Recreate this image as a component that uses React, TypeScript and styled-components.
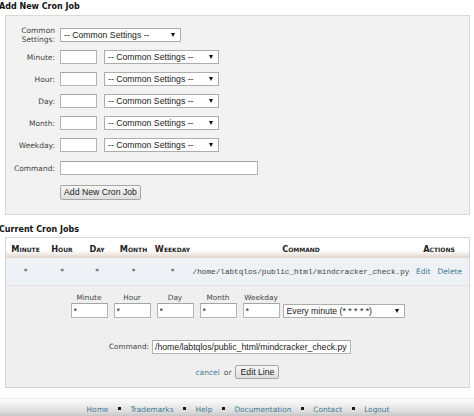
import React from 'react'
import styled, { createGlobalStyle } from 'styled-components'

const GlobalStyle = createGlobalStyle`
  html, body {
    margin: 0;
    padding: 0;
    background: #fff;
  }
  body {
    font-family: "DejaVu Sans", Verdana, sans-serif;
    color: #333;
  }
`

const Page = styled.div`
  width: 474px;
  height: 416px;
  overflow: hidden;
  display: flex;
  flex-direction: column;
`

const Content = styled.div`
  padding: 0 4px 0 5px;
`

const SectionTitle = styled.h3<{ $top?: number; $bottom?: number }>`
  margin: ${({ $top = 0, $bottom = 0 }) => `${$top}px 0 ${$bottom}px -6px`};
  font-size: 8px;
  font-weight: bold;
  line-height: 13px;
  color: #111;
  white-space: nowrap;
`

/* ---------- add form ---------- */

const FormPanel = styled.div`
  box-sizing: border-box;
  height: 200px;
  border: 1px solid #d9d9d9;
  background: #f2f2f2;
  padding-top: 8px;
`

const FormRow = styled.div<{ $offset?: number }>`
  display: flex;
  align-items: center;
  height: 22px;
  margin-top: ${({ $offset = 0 }) => $offset}px;
`

const FieldLabel = styled.label`
  width: 49px;
  margin-right: 5px;
  text-align: right;
  font-size: 7.5px;
  line-height: 9px;
  color: #444;
`

const TextInput = styled.input<{ $width: number; $height?: number }>`
  box-sizing: border-box;
  width: ${({ $width }) => $width}px;
  height: ${({ $height = 14 }) => $height}px;
  margin: 0;
  padding: 0 2px;
  border: 1px solid #b4b4b4;
  border-top-color: #a4a4a4;
  background: #fff;
  font-family: "Liberation Sans", Arial, sans-serif;
  font-size: 8.7px;
  color: #222;
  outline: none;
`

const SelectWrap = styled.div<{ $width: number; $gap?: number }>`
  position: relative;
  width: ${({ $width }) => $width}px;
  margin-left: ${({ $gap = 0 }) => $gap}px;

  &::after {
    content: '';
    position: absolute;
    right: 6px;
    top: 50%;
    margin-top: -2px;
    border-left: 2.5px solid transparent;
    border-right: 2.5px solid transparent;
    border-top: 4px solid #111;
    pointer-events: none;
  }
`

const Select = styled.select<{ $height?: number }>`
  appearance: none;
  box-sizing: border-box;
  display: block;
  width: 100%;
  height: ${({ $height = 14 }) => $height}px;
  margin: 0;
  padding: 0 0 0 3px;
  border: 1px solid #adadad;
  border-radius: 0;
  background: #fff;
  font-family: "Liberation Sans", Arial, sans-serif;
  font-size: 8.7px;
  color: #222;
  outline: none;
`

const Button = styled.button<{ $width: number; $height?: number }>`
  box-sizing: border-box;
  width: ${({ $width }) => $width}px;
  height: ${({ $height = 15 }) => $height}px;
  margin: 0;
  padding: 0;
  border: 1px solid #a6a6a6;
  border-radius: 2px;
  background: linear-gradient(to bottom, #f6f6f6 0%, #ebebeb 50%, #dedede 100%);
  font-family: "Liberation Sans", Arial, sans-serif;
  font-size: 8.7px;
  color: #222;
`

/* ---------- jobs table ---------- */

const columns = '39px 34px 36px 37px 41px 216px 1fr'

const JobsTable = styled.div`
  border: 1px solid #d6d6d6;
  border-bottom: none;
`

const HeadRow = styled.div`
  display: grid;
  grid-template-columns: ${columns};
  align-items: center;
  height: 20px;
  padding-top: 2px;
  box-sizing: border-box;
  background: linear-gradient(to bottom, #fff 0%, #fff 62%, #f1ebe7 80%, #e0d4cc 100%);
`

const HeadCell = styled.div`
  text-align: center;
  white-space: nowrap;
  font-size: 8.2px;
  font-weight: bold;
  font-variant: small-caps;
  color: #222;
`

const DataRow = styled.div`
  display: grid;
  grid-template-columns: ${columns};
  align-items: center;
  height: 27px;
  background: #eef1f6;
`

const DataCell = styled.div<{ $mono?: boolean }>`
  display: flex;
  justify-content: center;
  gap: 7px;
  white-space: nowrap;
  font-family: ${({ $mono }) =>
    $mono ? '"Liberation Mono", "Courier New", monospace' : '"DejaVu Sans", Verdana, sans-serif'};
  font-size: ${({ $mono }) => ($mono ? '7.7px' : '7.5px')};
  color: #444;
`

const Link = styled.a`
  color: #3e7b94;
  text-decoration: none;
  cursor: pointer;
`

const EditPanel = styled.div`
  box-sizing: border-box;
  height: 103px;
  padding-top: 7px;
  border-top: 1px solid #e2e2e2;
  border-bottom: 1px solid #cfcfcf;
  background: #efefef;
`

const EditFields = styled.div`
  display: flex;
  justify-content: center;
  align-items: flex-end;
  gap: 6px;
`

const EditField = styled.div`
  display: flex;
  flex-direction: column;
  align-items: center;
`

const SmallLabel = styled.span`
  font-size: 7.3px;
  line-height: 10px;
  color: #444;
`

const EditCommand = styled.div`
  display: flex;
  justify-content: center;
  align-items: center;
  gap: 3px;
  margin-top: 22px;
  padding-right: 15px;
`

const EditActions = styled.div`
  display: flex;
  justify-content: center;
  align-items: center;
  gap: 4px;
  margin-top: 11px;
  font-size: 7.5px;
  color: #555;
`

/* ---------- footer ---------- */

const Footer = styled.div`
  display: flex;
  justify-content: center;
  align-items: center;
  height: 18px;
  margin-top: 10px;
  padding: 4px 0 0 2px;
  box-sizing: border-box;
  border-top: 1px solid #f0f0f0;
  background: linear-gradient(to bottom, #fbfbfb 0%, #f1f1f1 30%, #dcdcdc 75%, #c6c6c6 100%);
  font-size: 7.4px;
`

const Sep = styled.span`
  width: 3px;
  height: 3px;
  margin: 0 9.5px 2px;
  background: #1a1a1a;
`

const fields = ['Minute', 'Hour', 'Day', 'Month', 'Weekday']
const command = '/home/labtqlos/public_html/mindcracker_check.py'
const footerLinks = ['Home', 'Trademarks', 'Help', 'Documentation', 'Contact', 'Logout']

const CommonSelect: React.FC<{ width: number; gap?: number }> = ({ width, gap }) => (
  <SelectWrap $width={width} $gap={gap}>
    <Select defaultValue="--">
      <option value="--">-- Common Settings --</option>
    </Select>
  </SelectWrap>
)

const App: React.FC = () => {
  return (
    <Page>
      <GlobalStyle />
      <Content>
        <SectionTitle $bottom={2}>Add New Cron Job</SectionTitle>
        <FormPanel>
          <FormRow>
            <FieldLabel>Common Settings:</FieldLabel>
            <CommonSelect width={121} />
          </FormRow>
          {fields.map((f) => (
            <FormRow key={f}>
              <FieldLabel>{f}:</FieldLabel>
              <TextInput $width={37} readOnly defaultValue="" />
              <CommonSelect width={115} gap={7} />
            </FormRow>
          ))}
          <FormRow $offset={1}>
            <FieldLabel>Command:</FieldLabel>
            <TextInput $width={198} readOnly defaultValue="" />
          </FormRow>
          <FormRow $offset={2}>
            <FieldLabel />
            <Button $width={81}>Add New Cron Job</Button>
          </FormRow>
        </FormPanel>

        <SectionTitle $top={8} $bottom={1}>Current Cron Jobs</SectionTitle>
        <JobsTable>
          <HeadRow>
            {fields.map((f) => (
              <HeadCell key={f}>{f}</HeadCell>
            ))}
            <HeadCell>Command</HeadCell>
            <HeadCell>Actions</HeadCell>
          </HeadRow>
          <DataRow>
            {fields.map((f) => (
              <DataCell key={f}>*</DataCell>
            ))}
            <DataCell $mono>{command}</DataCell>
            <DataCell>
              <Link>Edit</Link>
              <Link>Delete</Link>
            </DataCell>
          </DataRow>
          <EditPanel>
            <EditFields>
              {fields.map((f) => (
                <EditField key={f}>
                  <SmallLabel>{f}</SmallLabel>
                  <TextInput $width={37} $height={15} readOnly defaultValue="*" />
                </EditField>
              ))}
              <SelectWrap $width={122} $gap={-3}>
                <Select defaultValue="every">
                  <option value="every">Every minute (* * * * *)</option>
                </Select>
              </SelectWrap>
            </EditFields>
            <EditCommand>
              <SmallLabel>Command:</SmallLabel>
              <TextInput $width={199} readOnly defaultValue={command} />
            </EditCommand>
            <EditActions>
              <Link>cancel</Link>
              <span>or</span>
              <Button $width={44} $height={14}>Edit Line</Button>
            </EditActions>
          </EditPanel>
        </JobsTable>
      </Content>
      <Footer>
        {footerLinks.map((l, i) => (
          <React.Fragment key={l}>
            {i > 0 && <Sep />}
            <Link>{l}</Link>
          </React.Fragment>
        ))}
      </Footer>
    </Page>
  )
}

export default App
